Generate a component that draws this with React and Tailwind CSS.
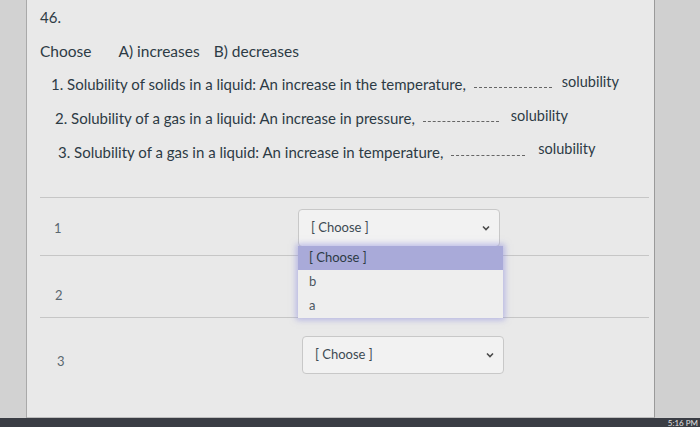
import React from 'react'

const Blank = ({ w }) => (
  <span className={`inline-block border-b border-dashed border-[#666] mx-2 ${w}`} style={{ height: 1, verticalAlign: 'middle', transform: 'translateY(3px)' }} />
)

const Chevron = () => (
  <svg width="10" height="10" viewBox="0 0 10 10" className="text-[#4a4a4a]">
    <path d="M2 3.5 L5 6.5 L8 3.5" fill="none" stroke="currentColor" strokeWidth="1.6" />
  </svg>
)

const Select = ({ className = '' }) => (
  <div className={`flex items-center justify-between w-[202px] h-[38px] bg-[#f2f2f2] border border-[#c8c8c8] rounded-sm pl-3 pr-2 text-[13px] text-[#3d4a53] ${className}`}>
    <span>[ Choose ]</span>
    <Chevron />
  </div>
)

const App = () => {
  return (
    <div className="w-[700px] h-[427px] bg-[#d4d4d4] overflow-hidden flex flex-col" style={{ fontFamily: 'Lato, "Open Sans", sans-serif' }}>
      <div className="flex flex-1">
        <div className="w-[27px] bg-[#d2d2d2] border-r border-[#a9a9a9]" />
        <div className="w-[628px] bg-[#e9e9e9] border-r border-[#9a9a9a] border-b border-b-[#bdbdbd] pl-[13px] text-[#2d3b45]">
          <div className="pt-[6px] text-[15px] leading-[22px]">46.</div>
          <div className="mt-[12px] text-[15.5px] leading-[22px] flex">
            <span>Choose</span>
            <span className="ml-[27px]">A) increases</span>
            <span className="ml-[14px]">B) decreases</span>
          </div>
          <div className="mt-[11px] text-[15px] leading-[22px] flex flex-col gap-[12px]">
            <div className="pl-[11px] flex items-center">
              <span>1. Solubility of solids in a liquid: An increase in the temperature,</span>
              <Blank w="w-[78px]" />
              <span className="ml-[2px] text-[14.5px] -translate-y-[2px]">solubility</span>
            </div>
            <div className="pl-[15px] flex items-center">
              <span>2. Solubility of a gas in a liquid: An increase in pressure,</span>
              <Blank w="w-[76px]" />
              <span className="ml-[4px] text-[14.5px] -translate-y-[2px]">solubility</span>
            </div>
            <div className="pl-[18px] flex items-center">
              <span>3. Solubility of a gas in a liquid: An increase in temperature,</span>
              <Blank w="w-[74px]" />
              <span className="ml-[5px] text-[14.5px] -translate-y-[3px]">solubility</span>
            </div>
          </div>

          <div className="mt-[34px] mr-[5px] border-t border-[#c6c6c6]">
            <div className="h-[57px] flex items-center relative">
              <span className="w-[258px] pl-[14px] text-[13px] text-[#5a6770] pt-[4px]">1</span>
              <Select className="mt-[3px]" />
              <div className="absolute left-[258px] top-[48px] w-[205px] bg-[#eeeeee] shadow-[0_0_6px_2px_rgba(140,140,220,0.55)] z-10 text-[13px]">
                <div className="h-[24px] bg-[#a9aad9] flex items-center pl-[11px] text-[#2d3b45]">[ Choose ]</div>
                <div className="h-[24px] flex items-center pl-[11px] text-[#4a5560]">b</div>
                <div className="h-[24px] flex items-center pl-[11px] text-[#4a5560]">a</div>
              </div>
            </div>
            <div className="h-[62px] border-t border-[#c6c6c6] flex items-center">
              <span className="pl-[15px] pt-[18px] text-[13px] text-[#5a6770]">2</span>
            </div>
            <div className="h-[70px] border-t border-[#c6c6c6] flex items-start">
              <span className="w-[262px] pl-[17px] pt-[34px] text-[13px] text-[#5a6770]">3</span>
              <Select className="mt-[18px]" />
            </div>
          </div>
        </div>
        <div className="flex-1 bg-[#d0d0d0]" />
      </div>
      <div className="h-[9px] bg-[#3a3d44] flex justify-end items-center pr-[2px]">
        <span className="text-[8px] leading-none text-[#e0e0e0]">5:16 PM</span>
      </div>
    </div>
  )
}

export default App
